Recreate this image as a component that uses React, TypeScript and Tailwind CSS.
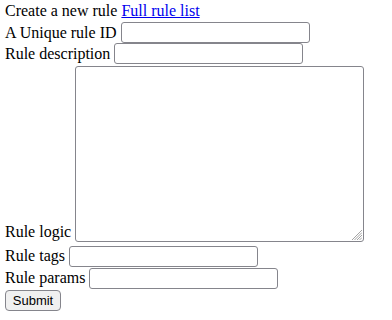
export default function App() {
    const field = 'box-border h-[21px] w-[189px] rounded-[3px] border border-[#85858c] bg-white px-[2px] text-[13px] outline-none';

    return (
        <div className="min-h-[320px] bg-white pl-[5px] font-['Liberation_Serif',serif] text-[16px] leading-[18px] text-black">
            <div className="flex h-[22px] items-center gap-[4px]">
                <span>Create a new rule</span>
                <a href="#" className="text-[#0000ee] underline">
                    Full rule list
                </a>
            </div>
            <div className="flex h-[21px] items-center gap-[4px]">
                <label htmlFor="rule_id">A Unique rule ID</label>
                <input id="rule_id" className={field} />
            </div>
            <div className="flex h-[21px] items-center gap-[4px]">
                <label htmlFor="rule_desc">Rule description</label>
                <input id="rule_desc" className={field} />
            </div>
            <div className="flex items-end gap-[4px] pt-[2px] pb-[3px]">
                <label htmlFor="rule_logic" className="pb-[1px]">
                    Rule logic
                </label>
                <div className="relative">
                    <textarea
                        id="rule_logic"
                        className="box-border block h-[176px] w-[289px] resize-none rounded-[3px] border border-[#85858c] bg-white outline-none"
                    />
                    {/* resize grip */}
                    <svg className="absolute right-[2px] bottom-[2px]" width="11" height="11" viewBox="0 0 11 11">
                        <path
                            d="M1 11 L11 1 M3.5 11 L11 3.5 M6 11 L11 6 M8.5 11 L11 8.5"
                            stroke="#9a9a9a"
                            strokeWidth="0.9"
                            fill="none"
                        />
                    </svg>
                </div>
            </div>
            <div className="flex h-[22px] items-center gap-[4px]">
                <label htmlFor="rule_tags">Rule tags</label>
                <input id="rule_tags" className={field} />
            </div>
            <div className="flex h-[22px] items-center gap-[4px]">
                <label htmlFor="rule_params">Rule params</label>
                <input id="rule_params" className={field} />
            </div>
            <div className="flex h-[22px] items-center">
                <button
                    type="button"
                    className="box-border h-[21px] w-[56px] rounded-[4px] border border-[#85858c] bg-[#f0f0f0] font-['Liberation_Sans',sans-serif] text-[13px] leading-none text-black"
                >
                    Submit
                </button>
            </div>
        </div>
    );
}
